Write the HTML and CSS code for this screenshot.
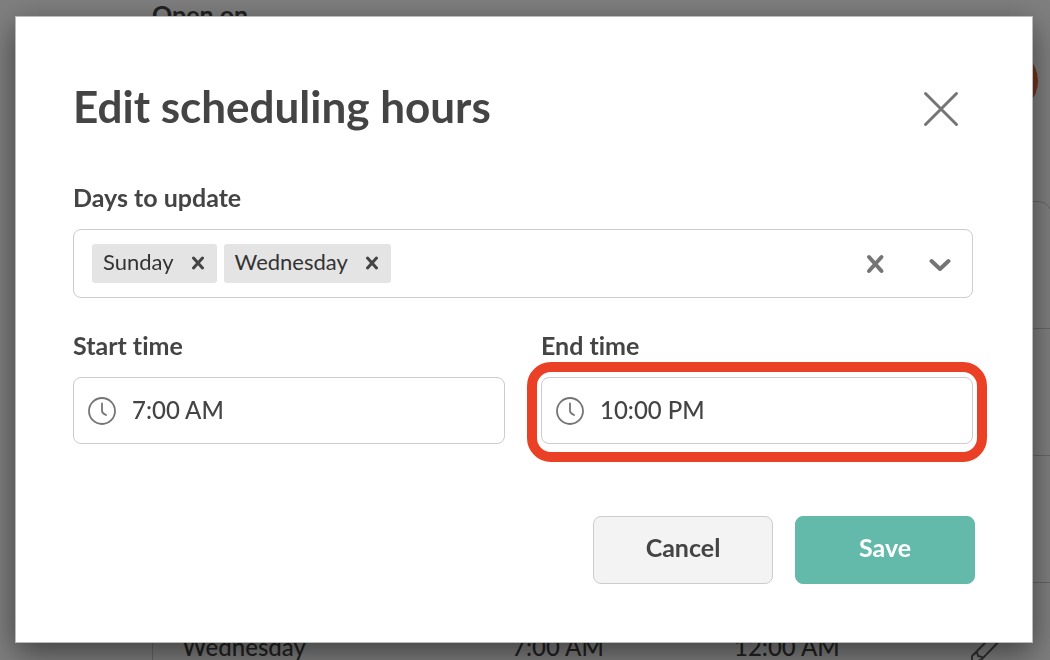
FILE: index.html
```html
<!DOCTYPE html>
<html lang="en">
<head>
    <meta charset="UTF-8">
    <meta name="viewport" content="width=device-width, initial-scale=1.0">
    <title>Edit scheduling hours</title>
    <link rel="stylesheet" href="styles.css">
</head>
<body>

    <!-- Settings page behind the dialog -->
    <main class="page" aria-hidden="true">
        <h2 class="page-heading">Open on</h2>
        <div class="page-actions"><span class="page-dot"></span></div>
        <div class="hours-card">
            <table class="hours-table">
                <colgroup>
                    <col class="col-day">
                    <col class="col-time">
                    <col class="col-time">
                    <col>
                </colgroup>
                <tbody>
                    <tr><td></td><td></td><td></td><td></td></tr>
                    <tr><td></td><td></td><td></td><td></td></tr>
                    <tr><td></td><td></td><td></td><td></td></tr>
                    <tr>
                        <td class="day">Wednesday</td>
                        <td>7:00 AM</td>
                        <td>12:00 AM</td>
                        <td class="edit">
                            <svg width="44" height="44" viewBox="0 0 44 44" fill="none" stroke="#666" stroke-width="2" stroke-linejoin="round">
                                <path d="M3 42 L3 34 L30 7 L38 11 L13 37 Z M3 34 L8 30 L9 34 L13 35 L13 37"/>
                            </svg>
                        </td>
                    </tr>
                </tbody>
            </table>
        </div>
    </main>

    <!-- Dialog -->
    <div class="backdrop">
        <form class="modal" role="dialog" aria-labelledby="modal-title">
            <header class="modal-header">
                <h1 class="modal-title" id="modal-title">Edit scheduling hours</h1>
                <button type="button" class="icon-btn" aria-label="Close">
                    <svg width="36" height="36" viewBox="0 0 36 36" stroke="#757575" stroke-width="3" stroke-linecap="round">
                        <path d="M2.5 2.5 L33.5 33.5 M33.5 2.5 L2.5 33.5"/>
                    </svg>
                </button>
            </header>

            <div class="fields">
                <div class="field field-wide">
                    <label class="label" for="days">Days to update</label>
                    <div class="control control-days">
                        <span class="tag">Sunday
                            <button type="button" class="icon-btn" aria-label="Remove Sunday">
                                <svg width="14" height="16" viewBox="0 0 14 16" stroke="#444" stroke-width="3" stroke-linecap="round">
                                    <path d="M2.5 4 L11.5 14 M11.5 4 L2.5 14"/>
                                </svg>
                            </button>
                        </span>
                        <span class="tag">Wednesday
                            <button type="button" class="icon-btn" aria-label="Remove Wednesday">
                                <svg width="14" height="16" viewBox="0 0 14 16" stroke="#444" stroke-width="3" stroke-linecap="round">
                                    <path d="M2.5 4 L11.5 14 M11.5 4 L2.5 14"/>
                                </svg>
                            </button>
                        </span>
                        <input type="text" class="input" id="days" role="combobox" aria-expanded="false">
                        <button type="button" class="icon-btn" aria-label="Clear all">
                            <svg width="20" height="20" viewBox="0 0 20 20" stroke="#757575" stroke-width="4" stroke-linecap="round">
                                <path d="M3 3 L15.5 17 M15.5 3 L3 17"/>
                            </svg>
                        </button>
                        <button type="button" class="icon-btn btn-open" aria-label="Show days">
                            <svg width="22" height="20" viewBox="0 0 22 20" fill="none" stroke="#757575" stroke-width="4" stroke-linecap="round" stroke-linejoin="round">
                                <path d="M2.5 7 L11 15 L19.5 7"/>
                            </svg>
                        </button>
                    </div>
                </div>

                <div class="field">
                    <label class="label" for="start">Start time</label>
                    <div class="control control-time">
                        <svg width="28" height="28" viewBox="0 0 28 28" fill="none" stroke="#757575" stroke-width="1.8" stroke-linecap="round" stroke-linejoin="round">
                            <circle cx="14" cy="14" r="13"/>
                            <path d="M14 6.5 V14 Q14 16 18 18"/>
                        </svg>
                        <input type="text" class="input" id="start" value="7:00 AM">
                    </div>
                </div>

                <div class="field">
                    <label class="label" for="end">End time</label>
                    <div class="control control-time highlighted">
                        <svg width="28" height="28" viewBox="0 0 28 28" fill="none" stroke="#757575" stroke-width="1.8" stroke-linecap="round" stroke-linejoin="round">
                            <circle cx="14" cy="14" r="13"/>
                            <path d="M14 6.5 V14 Q14 16 18 18"/>
                        </svg>
                        <input type="text" class="input" id="end" value="10:00 PM">
                    </div>
                </div>
            </div>

            <footer class="modal-footer">
                <button type="button" class="btn btn-cancel">Cancel</button>
                <button type="submit" class="btn btn-save">Save</button>
            </footer>
        </form>
    </div>

</body>
</html>
```

FILE: styles.css
```css
* {
    box-sizing: border-box;
}

body {
    margin: 0;
    height: 100vh;
    overflow: hidden;
    font-family: Lato, "Open Sans", sans-serif;
    font-size: 24px;
    font-weight: 500;
    font-variant-ligatures: none;
    color: #444;
    background-color: #fff;
}

/* Page behind the dialog */
.page {
    height: 100vh;
    padding-left: 152px;
    overflow: hidden;
}

.page-heading {
    margin: 0;
    font-size: 25px;
    line-height: 28px;
    font-weight: bold;
}

.page-actions {
    display: flex;
    justify-content: flex-end;
    padding: 20px 12px 87px;
}

.page-dot {
    width: 66px;
    height: 66px;
    border-radius: 50%;
    background-color: #e8693c;
}

.hours-card {
    margin-right: -2px;
    border: 1px solid #ccc;
    border-radius: 14px;
}

.hours-table {
    width: 100%;
    border-spacing: 0;
    table-layout: fixed;
}

.hours-table td {
    height: 127px;
    padding: 0;
    border-bottom: 1px solid #ccc;
}

.col-day {
    width: 359px;
}

.col-time {
    width: 222px;
}

.hours-table .day {
    padding-left: 29px;
}

.hours-table .edit {
    padding-left: 13px;
}

/* Dialog */
.backdrop {
    position: fixed;
    inset: 0;
    padding: 16px 17px 17px 15px;
    background-color: rgba(0, 0, 0, 0.5);
}

.modal {
    height: 100%;
    padding: 60px 57px 58px;
    border: 1px solid #bbb;
    background-color: #fff;
    box-shadow: 0 10px 30px rgba(0, 0, 0, 0.5);
}

.modal-header {
    display: flex;
    justify-content: space-between;
    height: 64px;
    padding-right: 16px;
}

.modal-title {
    margin: 0;
    font-size: 44px;
    line-height: 58px;
    font-weight: bold;
}

.icon-btn {
    display: flex;
    align-items: center;
    padding: 0;
    border: none;
    background: none;
    cursor: pointer;
}

.fields {
    display: grid;
    grid-template-columns: 1fr 1fr;
    gap: 31px 36px;
    margin-top: 40px;
    padding-right: 2px;
}

.field-wide {
    grid-column: 1 / -1;
}

.label {
    display: block;
    margin-bottom: 16px;
    font-size: 25px;
    line-height: 32px;
    font-weight: bold;
}

.control {
    display: flex;
    align-items: center;
    border: 1px solid #ccc;
    border-radius: 8px;
}

.control-days {
    gap: 7px;
    height: 69px;
    padding: 0 21px 0 18px;
}

.control-time {
    position: relative;
    gap: 16px;
    height: 67px;
    padding: 0 14px;
}

/* Red ring drawn round the field */
.highlighted::after {
    content: "";
    position: absolute;
    inset: -16px -15px -19px;
    border: 10px solid #ea4025;
    border-radius: 24px;
    pointer-events: none;
}

.tag {
    display: flex;
    align-items: center;
    gap: 17px;
    height: 39px;
    padding: 0 12px 4px 11px;
    border-radius: 3px;
    font-size: 22px;
    font-weight: normal;
    color: #333;
    background-color: #e4e4e4;
}

.input {
    flex: 1;
    min-width: 0;
    padding: 0 0 3px;
    border: none;
    outline: none;
    font: inherit;
    color: inherit;
    background: none;
}

.btn-open {
    margin-left: 36px;
}

.modal-footer {
    display: flex;
    justify-content: flex-end;
    gap: 22px;
    margin-top: 72px;
}

.btn {
    width: 180px;
    height: 68px;
    padding: 0 0 6px;
    border: 1px solid #ccc;
    border-radius: 8px;
    font: inherit;
    font-size: 25px;
    font-weight: bold;
    color: #444;
    background-color: #f3f3f3;
    cursor: pointer;
}

.btn-save {
    border-color: #64baaa;
    color: #fff;
    background-color: #64baaa;
}
```
